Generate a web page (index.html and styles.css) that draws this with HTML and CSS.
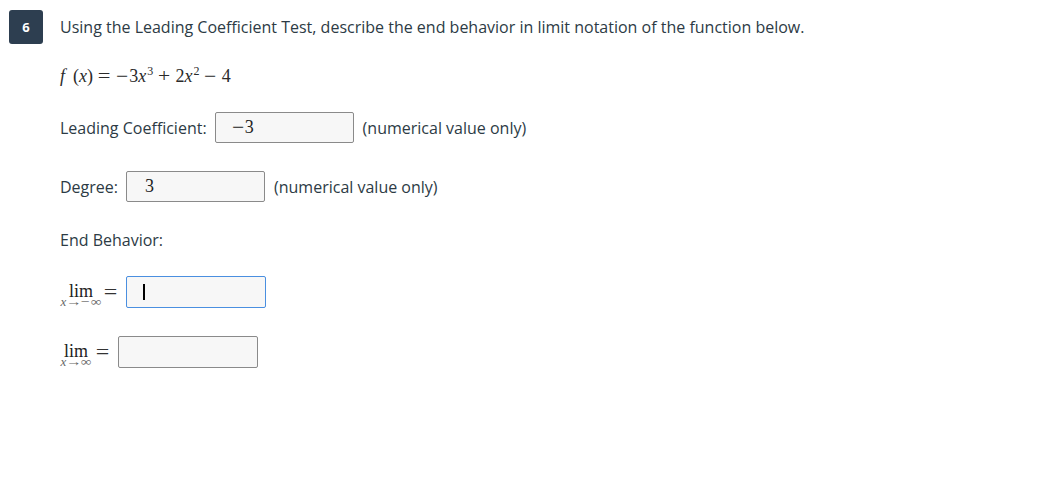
FILE: index.html
```html
<!DOCTYPE html>
<html>
<head>
<meta charset="utf-8">
<link rel="stylesheet" href="styles.css">
</head>
<body>
<div class="question">
  <div class="badge">6</div>
  <div class="content">
    <div class="prompt">Using the Leading Coefficient Test, describe the end behavior in limit notation of the function below.</div>
    <div class="formula math"><i>f</i><span class="sp"></span>(<i>x</i>)<span class="rel">=</span><span class="neg">&minus;</span>3<i>x</i><sup>3</sup><span class="bin">+</span>2<i>x</i><sup>2</sup><span class="bin">&minus;</span>4</div>
    <div class="row row-lc">
      <span class="label">Leading Coefficient:</span>
      <div class="box math"><span class="val"><span class="neg">&minus;</span>3</span></div>
      <span class="hint">(numerical value only)</span>
    </div>
    <div class="row row-deg">
      <span class="label">Degree:</span>
      <div class="box math"><span class="val">3</span></div>
      <span class="hint">(numerical value only)</span>
    </div>
    <div class="end">End Behavior:</div>
    <div class="row row-lim1">
      <span class="lim math"><span class="lim-word">lim</span><span class="lim-sub"><span class="s-x"><i>x</i></span><span class="s-arr">&rarr;</span><span class="s-min">&minus;</span><span class="s-inf">&infin;</span></span></span>
      <span class="eq math">=</span>
      <div class="box lbox focus"><span class="caret"></span></div>
    </div>
    <div class="row row-lim2">
      <span class="lim math"><span class="lim-word">lim</span><span class="lim-sub"><span class="s-x"><i>x</i></span><span class="s-arr">&rarr;</span><span class="s-inf">&infin;</span></span></span>
      <span class="eq math">=</span>
      <div class="box lbox"></div>
    </div>
  </div>
</div>
</body>
</html>
```
FILE: styles.css
```css
html, body {
  margin: 0;
  padding: 0;
  background: #ffffff;
}
body {
  font-family: "Open Sans", "Liberation Sans", sans-serif;
  color: #2d3b45;
  font-size: 16px;
  width: 1057px;
  height: 494px;
  overflow: hidden;
}
.question {
  display: flex;
  padding: 10px 0 0 9px;
}
.badge {
  width: 34px;
  height: 34px;
  flex: 0 0 34px;
  background: #2d3e50;
  color: #fff;
  border-radius: 3px;
  font-weight: 700;
  font-size: 13px;
  display: flex;
  align-items: center;
  justify-content: center;
}
.content {
  margin-left: 17px;
  display: flex;
  flex-direction: column;
}
.prompt {
  line-height: 34px;
  height: 34px;
}
.math {
  font-family: "Liberation Serif", "DejaVu Serif", serif;
}
.math i {
  font-style: italic;
}
.formula {
  margin-top: 21px;
  font-size: 18px;
  line-height: 22px;
  height: 22px;
  color: #2a2a2a;
}
.formula sup {
  font-size: 12px;
  vertical-align: 7px;
  line-height: 0;
  margin-left: 1px;
}
.formula .sp {
  display: inline-block;
  width: 8px;
}
.formula .rel {
  display: inline-block;
  margin: 0 7px 0 6px;
  transform: scaleX(1.25);
}
.formula .bin {
  display: inline-block;
  margin: 0 6px 0 6px;
  transform: scaleX(1.2);
}
.neg {
  display: inline-block;
  transform: scaleX(1.2);
  margin: 0 2px 0 1px;
}
.row {
  display: flex;
  align-items: center;
}
.label {
  margin-right: 8px;
}
.hint {
  margin-left: 9px;
}
.box {
  box-sizing: border-box;
  width: 139px;
  height: 31px;
  border: 1px solid #8a8a8a;
  border-radius: 2px;
  background: #f7f7f7;
  display: flex;
  align-items: center;
  padding-left: 16px;
  font-size: 18px;
  color: #222;
}
.row-lc {
  margin-top: 25px;
}
.row-deg {
  margin-top: 28px;
}
.row-deg .box {
  padding-left: 18px;
}
.end {
  margin-top: 27px;
  line-height: 22px;
}
.row-lim1 {
  margin-top: 25px;
}
.row-lim2 {
  margin-top: 28px;
}
.lim {
  display: inline-flex;
  flex-direction: column;
  align-items: center;
  align-self: flex-start;
  margin-top: 8px;
  color: #222;
}
.lim-word {
  font-size: 18px;
  line-height: 14px;
}
.lim-sub {
  display: flex;
  font-size: 13px;
  line-height: 8px;
  color: #666;
}
.lim-sub > span {
  display: inline-block;
  text-align: center;
}
.s-x { width: 7px; }
.s-arr { width: 13px; transform: scaleX(1.2); }
.s-min { width: 10px; transform: scaleX(1.2); }
.s-inf { width: 12px; transform: scaleX(1.15); }
.eq {
  font-size: 20px;
  margin: 0 10px 0 3px;
  color: #333;
  transform: scaleX(1.2);
}
.row-lim2 .eq {
  margin-left: 5px;
}
.box.lbox {
  width: 140px;
  height: 32px;
}
.box.focus {
  border: 1.5px solid #4a8fe0;
  padding-left: 16px;
}
.caret {
  width: 1.5px;
  height: 16px;
  background: #000;
}
```
